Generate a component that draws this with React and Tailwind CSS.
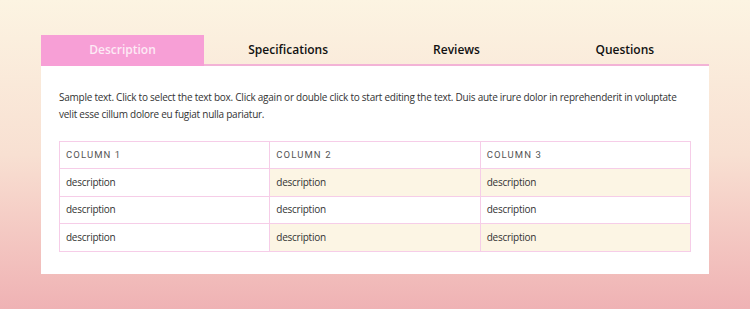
const tabs = ['Description', 'Specifications', 'Reviews', 'Questions'];

const rows = [
  { shade: true },
  { shade: false },
  { shade: true },
];

export default function App() {
  return (
    <div
      className="w-[750px] h-[309px] bg-gradient-to-b from-[#fcf4e2] via-[#f8e0d2] to-[#efb2b4] px-[41px] pt-[35px]"
      style={{ fontFamily: '"Open Sans", "Liberation Sans", sans-serif' }}
    >
      <div className="flex items-end h-[31px]">
        {tabs.map((t, i) => (
          <div
            key={t}
            className={
              i === 0
                ? 'w-[163px] h-[31px] pb-[2px] flex items-center justify-center bg-[#f79fd6] text-[#fdeaf5] text-[12px] font-semibold'
                : 'flex-1 h-[31px] flex items-center justify-center border-b-2 border-[#f3b3d6] text-[#111] text-[12px] font-semibold'
            }
          >
            {t}
          </div>
        ))}
      </div>
      <div className="bg-white h-[208px] px-[18px] pt-[23px]">
        <p className="text-[10px] tracking-[-0.25px] leading-[17px] text-[#333]">
          Sample text. Click to select the text box. Click again or double click to start editing the text. Duis aute irure dolor in reprehenderit in voluptate velit esse cillum dolore eu fugiat nulla pariatur.
        </p>
        <table className="mt-[18px] w-[632px] border-collapse text-[10px] tracking-[-0.25px] text-[#333]">
          <thead>
            <tr className="h-[27px]">
              {['COLUMN 1', 'COLUMN 2', 'COLUMN 3'].map((c) => (
                <th
                  key={c}
                  className="border border-[#f6cde8] px-[6px] text-left font-normal tracking-[1.1px] text-[9.5px] text-[#555] w-1/3"
                  style={{ fontFamily: 'Roboto, "Liberation Sans", sans-serif' }}
                >
                  {c}
                </th>
              ))}
            </tr>
          </thead>
          <tbody>
            {rows.map((r, i) => (
              <tr key={i} className="h-[27.5px]">
                <td className="border border-[#f6cde8] px-[6px] bg-white">description</td>
                <td className={`border border-[#f6cde8] px-[6px] ${r.shade ? 'bg-[#fcf5e4]' : 'bg-white'}`}>description</td>
                <td className={`border border-[#f6cde8] px-[6px] ${r.shade ? 'bg-[#fcf5e4]' : 'bg-white'}`}>description</td>
              </tr>
            ))}
          </tbody>
        </table>
      </div>
    </div>
  );
}
